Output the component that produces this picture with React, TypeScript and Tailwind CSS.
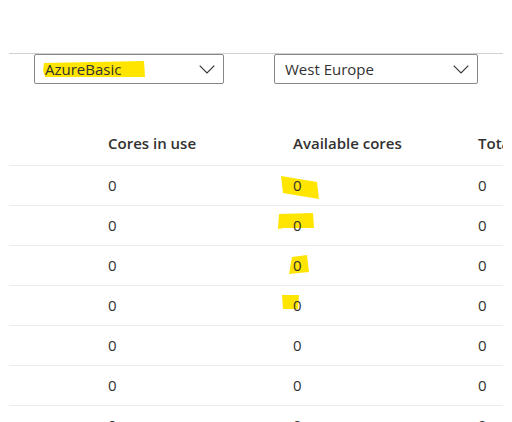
const font = { fontFamily: '"Open Sans", "Noto Sans", sans-serif' };

function Chevron() {
  return (
    <svg width="16" height="9" viewBox="0 0 16 9" fill="none" className="shrink-0">
      <path d="M0.7 0.7 L8 8 L15.3 0.7" stroke="#323130" strokeWidth="1.1" />
    </svg>
  );
}

function Mark({ points, w, h, className }: { points: string; w: number; h: number; className: string }) {
  return (
    <svg width={w} height={h} viewBox={`0 0 ${w} ${h}`} className={"pointer-events-none absolute " + className}>
      <polygon points={points} fill="#ffe500" />
    </svg>
  );
}

function Select({ label, className, mark }: { label: string; className: string; mark?: boolean }) {
  return (
    <div className={"flex h-[30px] items-center justify-between rounded-[2px] border border-[#8a8886] bg-white pl-[10px] pr-[8px] " + className}>
      <span className="relative text-[15px] text-[#323130]">
        {mark && <Mark w={102} h={17} points="1,2 101,0 102,16 2,16 0,9" className="-left-[2px] top-[3px]" />}
        <span className="relative">{label}</span>
      </span>
      <Chevron />
    </div>
  );
}

// yellow marker strokes over the "Available cores" values
const marks: Record<number, { w: number; h: number; points: string; cls: string }> = {
  0: { w: 38, h: 23, points: "0,0 36,6 38,23 2,17", cls: "-left-[12px] top-[2px]" },
  1: { w: 36, h: 17, points: "1,1 35,0 36,15 6,15 0,16", cls: "-left-[15px] -top-[1px]" },
  2: { w: 20, h: 19, points: "3,2 18,0 20,17 0,19", cls: "-left-[4px] top-[1px]" },
  3: { w: 18, h: 15, points: "0,0 17,0 16,14 1,14", cls: "-left-[11px] top-[1px]" },
};

export default function App() {
  const rows = Array.from({ length: 7 });
  return (
    <div className="h-[422px] w-[512px] overflow-hidden bg-white" style={font}>
      <div className="h-[53px]" />
      <div className="ml-[9px] h-px w-[494px] bg-[#d2d0ce]" />
      <div className="flex">
        <Select label="AzureBasic" className="ml-[34px] w-[190px]" mark />
        <Select label="West Europe" className="ml-[50px] w-[204px]" />
      </div>
      <div className="ml-[9px] mt-[41px] w-[494px] overflow-hidden text-[15px] text-[#323130]">
        <div className="grid h-[41px] grid-cols-[99px_185px_185px_185px] items-start border-b border-[#edebe9] pt-[7px] font-semibold">
          <div />
          <div className="whitespace-nowrap">Cores in use</div>
          <div className="whitespace-nowrap">Available cores</div>
          <div className="whitespace-nowrap">Total cores</div>
        </div>
        {rows.map((_, i) => (
          <div key={i} className="grid h-[40px] grid-cols-[99px_185px_185px_185px] items-center border-b border-[#edebe9]">
            <div />
            <div>0</div>
            <div>
              {marks[i] ? (
                <span className="relative inline-block">
                  <Mark w={marks[i].w} h={marks[i].h} points={marks[i].points} className={marks[i].cls} />
                  <span className="relative">0</span>
                </span>
              ) : (
                "0"
              )}
            </div>
            <div>0</div>
          </div>
        ))}
      </div>
    </div>
  );
}
